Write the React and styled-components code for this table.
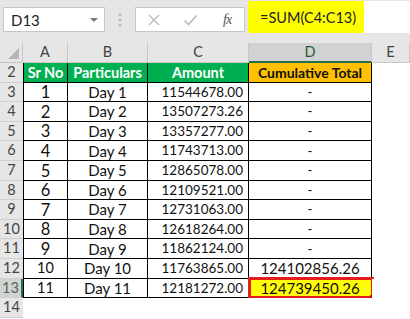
import React from "react";
import styled, { createGlobalStyle } from "styled-components";

const GlobalStyle = createGlobalStyle`
  body {
    margin: 0;
    background: #ffffff;
    font-family: Lato, "Open Sans", sans-serif;
  }
`;

const rows = [
  ["1", "Day 1", "11544678.00", "-"],
  ["2", "Day 2", "13507273.26", "-"],
  ["3", "Day 3", "13357277.00", "-"],
  ["4", "Day 4", "11743713.00", "-"],
  ["5", "Day 5", "12865078.00", "-"],
  ["6", "Day 6", "12109521.00", "-"],
  ["7", "Day 7", "12731063.00", "-"],
  ["8", "Day 8", "12618264.00", "-"],
  ["9", "Day 9", "11862124.00", "-"],
  ["10", "Day 10", "11763865.00", "124102856.26"],
  ["11", "Day 11", "12181272.00", "124739450.26"],
];

const Page = styled.div`
  width: 410px;
  height: 319px;
  overflow: hidden;
  background: #ffffff;
`;

const Toolbar = styled.div`
  height: 43px;
  display: flex;
  align-items: flex-start;
  background: #e6e6e6;
  box-sizing: border-box;
  padding-left: 3px;
`;

const NameBox = styled.div`
  margin-top: 7px;
  width: 102px;
  height: 25px;
  box-sizing: border-box;
  background: #fff;
  border: 1px solid #c6c6c6;
  display: flex;
  align-items: center;
  justify-content: space-between;
  padding: 0 6px 0 7px;
  font-size: 15px;
  color: #222;
`;

const Caret = styled.span`
  width: 0;
  height: 0;
  border-left: 4px solid transparent;
  border-right: 4px solid transparent;
  border-top: 4px solid #7a7a7a;
`;

const Grip = styled.div`
  width: 30px;
  margin-top: 13px;
  display: flex;
  justify-content: center;
`;

const FxButtons = styled.div`
  margin-top: 7px;
  width: 110px;
  height: 25px;
  box-sizing: border-box;
  background: #fff;
  border: 1px solid #c6c6c6;
  display: flex;
  align-items: center;
  padding-left: 11px;
  gap: 22px;
`;

const FxLabel = styled.span`
  font-family: "Liberation Serif", serif;
  font-style: italic;
  font-size: 14px;
  color: #555;
  margin-left: 3px;
  letter-spacing: -1px;
`;

const FormulaInput = styled.div`
  margin-left: 3px;
  flex: 1;
  height: 32px;
  margin-top: 1px;
  box-sizing: border-box;
  background: #fff;
  display: flex;
`;

const Highlight = styled.div`
  background: #ffff00;
  font-size: 14.5px;
  color: #222;
  display: flex;
  align-items: center;
  padding: 0 8px 0 12px;
  white-space: nowrap;
`;

const Sheet = styled.div`
  display: grid;
  grid-template-columns: 23px 45px 80px 101px 123px 1fr;
  grid-template-rows: 20px repeat(13, 19.6px);
`;

const Corner = styled.div`
  background: #e6e6e6;
  border-bottom: 1px solid #c6c6c6;
  border-right: 1px solid #c6c6c6;
  box-sizing: border-box;
  position: relative;
`;

const CornerMark = styled.span`
  position: absolute;
  right: 3px;
  bottom: 3px;
  width: 0;
  height: 0;
  border-left: 11px solid transparent;
  border-bottom: 11px solid #b7b7b7;
`;

const ColHead = styled.div`
  background: ${(p) => (p.$active ? "#d2d2d2" : "#e6e6e6")};
  color: ${(p) => (p.$active ? "#1e5e3a" : "#444")};
  border-right: 1px solid #c6c6c6;
  border-bottom: ${(p) => (p.$active ? "2px solid #217346" : "1px solid #c6c6c6")};
  box-sizing: border-box;
  display: flex;
  align-items: center;
  justify-content: center;
  font-size: 14.5px;
  line-height: 1;
`;

const RowHead = styled.div`
  background: ${(p) => (p.$active ? "#d2d2d2" : "#e6e6e6")};
  color: ${(p) => (p.$active ? "#4a6a58" : "#444")};
  border-bottom: 1px solid #cfcfcf;
  border-right: ${(p) => (p.$active ? "2px solid #217346" : "none")};
  box-sizing: border-box;
  display: flex;
  align-items: center;
  justify-content: center;
  font-size: 14.5px;
  line-height: 1;
`;

const Cell = styled.div`
  position: relative;
  box-sizing: border-box;
  display: flex;
  align-items: center;
  justify-content: ${(p) => p.$align || "center"};
  padding: 1px ${(p) => (p.$align === "flex-end" ? "5px" : "0")} 0;
  background: ${(p) => p.$bg || "#fff"};
  color: ${(p) => p.$color || "#111"};
  font-weight: ${(p) => (p.$bold ? 700 : 400)};
  font-size: ${(p) => p.$size || 14}px;
  line-height: 1;
  white-space: nowrap;
  border-right: ${(p) => (p.$plain ? "none" : "1px solid #000")};
  border-bottom: ${(p) => (p.$plain ? "none" : "1px solid #000")};
  border-left: ${(p) => (p.$first ? "1px solid #000" : "none")};
`;

const Selection = styled.span`
  position: absolute;
  top: -2px;
  left: -1px;
  right: -3px;
  bottom: -2px;
  border: 3px solid #e21d1d;
  pointer-events: none;
`;

const FillHandle = styled.span`
  position: absolute;
  right: -4px;
  bottom: -4px;
  width: 5px;
  height: 5px;
  background: #b01515;
`;

const GripDots = () => (
  <svg width="4" height="14" viewBox="0 0 4 14">
    <circle cx="2" cy="2" r="1.3" fill="#b5b5b5" />
    <circle cx="2" cy="7" r="1.3" fill="#b5b5b5" />
    <circle cx="2" cy="12" r="1.3" fill="#b5b5b5" />
  </svg>
);

const CrossIcon = () => (
  <svg width="14" height="14" viewBox="0 0 14 14">
    <path d="M2 2 L12 12 M12 2 L2 12" stroke="#b9b9b9" strokeWidth="1.4" fill="none" />
  </svg>
);

const CheckIcon = () => (
  <svg width="15" height="14" viewBox="0 0 15 14">
    <path d="M1.5 7.5 L5.5 11.5 L13.5 2.5" stroke="#b9b9b9" strokeWidth="1.6" fill="none" />
  </svg>
);

const App = () => {
  return (
    <Page>
      <GlobalStyle />
      <Toolbar>
        <NameBox>
          <span>D13</span>
          <Caret />
        </NameBox>
        <Grip>
          <GripDots />
        </Grip>
        <FxButtons>
          <CrossIcon />
          <CheckIcon />
          <FxLabel>fx</FxLabel>
        </FxButtons>
        <FormulaInput>
          <Highlight>=SUM(C4:C13)</Highlight>
        </FormulaInput>
      </Toolbar>
      <Sheet>
        <Corner>
          <CornerMark />
        </Corner>
        <ColHead>A</ColHead>
        <ColHead>B</ColHead>
        <ColHead>C</ColHead>
        <ColHead $active>D</ColHead>
        <ColHead>E</ColHead>

        <RowHead>2</RowHead>
        <Cell $first $bg="#00b050" $color="#fff" $bold $size={14.5}>Sr No</Cell>
        <Cell $bg="#00b050" $color="#fff" $bold $size={14.5}>Particulars</Cell>
        <Cell $bg="#00b050" $color="#fff" $bold $size={14.5}>Amount</Cell>
        <Cell $bg="#ffc000" $color="#111" $bold $size={14}>Cumulative Total</Cell>
        <Cell $plain />

        {rows.map(([no, day, amount, total], i) => {
          const last = i === rows.length - 1;
          return (
            <React.Fragment key={no}>
              <RowHead $active={last}>{i + 3}</RowHead>
              <Cell $first $size={no.length > 1 ? 14.5 : 16.5}>{no}</Cell>
              <Cell $size={15}>{day}</Cell>
              <Cell $align="flex-end" $size={13.5}>{amount}</Cell>
              <Cell $bg={last ? "#ffff00" : undefined} $size={total === "-" ? 13 : 15}>
                {total}
                {last && (
                  <Selection>
                    <FillHandle />
                  </Selection>
                )}
              </Cell>
              <Cell $plain />
            </React.Fragment>
          );
        })}

        <RowHead>14</RowHead>
        <Cell $plain />
        <Cell $plain />
        <Cell $plain />
        <Cell $plain />
        <Cell $plain />
      </Sheet>
    </Page>
  );
};

export default App;
